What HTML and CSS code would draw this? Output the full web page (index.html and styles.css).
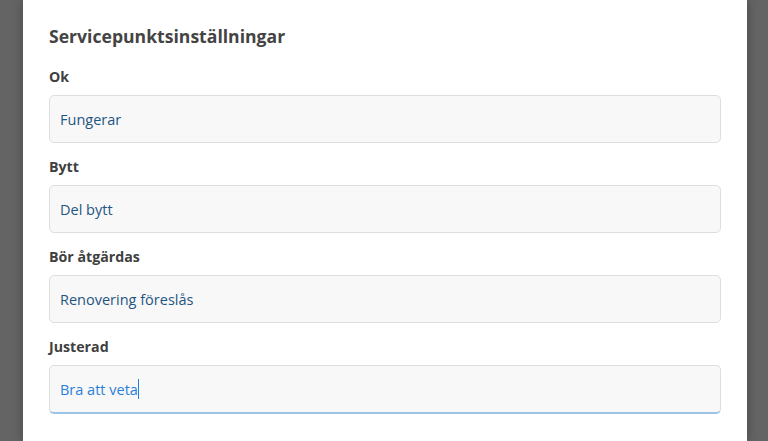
FILE: index.html
```html
<!DOCTYPE html>
<html lang="sv">

<head>
    <meta charset="UTF-8">
    <meta name="viewport" content="width=device-width, initial-scale=1.0">
    <title>Servicepunktsinställningar</title>
    <link rel="stylesheet" href="styles.css">
</head>

<body>
    <div class="modal">
        <h2 class="modal-title">Servicepunktsinställningar</h2>

        <label class="field-label" for="ok">Ok</label>
        <input class="field-input" type="text" id="ok" value="Fungerar">

        <label class="field-label" for="bytt">Bytt</label>
        <input class="field-input" type="text" id="bytt" value="Del bytt">

        <label class="field-label" for="atgardas">Bör åtgärdas</label>
        <input class="field-input" type="text" id="atgardas" value="Renovering föreslås">

        <label class="field-label" for="justerad">Justerad</label>
        <div class="field-input focused" id="justerad">Bra att veta<span class="caret"></span></div>
    </div>
</body>

</html>
```

FILE: styles.css
```css
* {
    box-sizing: border-box;
}

body {
    margin: 0;
    padding: 0;
    height: 441px;
    overflow: hidden;
    background-color: #646464;
    font-family: "Open Sans", Arial, sans-serif;
}

/* modal panel */
.modal {
    width: 724px;
    height: 441px;
    margin: 0 0 0 23px;
    padding: 23px 26px 0 26px;
    background-color: #fff;
    box-shadow: 0 0 10px rgba(0, 0, 0, 0.3);
}

.modal-title {
    margin: 0 0 18px 0;
    font-size: 17.6px;
    line-height: 26px;
    font-weight: 700;
    color: #444;
}

.field-label {
    display: block;
    font-size: 14.2px;
    line-height: 20px;
    font-weight: 700;
    color: #404040;
    margin-bottom: 8px;
}

.field-input {
    display: block;
    width: 100%;
    height: 48px;
    margin: 0 0 14px 0;
    padding: 0 10px;
    border: 1px solid #dedede;
    border-radius: 5px;
    background-color: #f8f8f8;
    font-family: "Open Sans", Arial, sans-serif;
    font-size: 14.5px;
    color: #1f5582;
    outline: none;
}

.focused {
    display: flex;
    align-items: center;
    height: 49px;
    color: #2a80d8;
    border-bottom: 2px solid #9dc3e6;
}

.caret {
    display: inline-block;
    width: 1px;
    height: 20px;
    background-color: #2a80d8;
}
```
